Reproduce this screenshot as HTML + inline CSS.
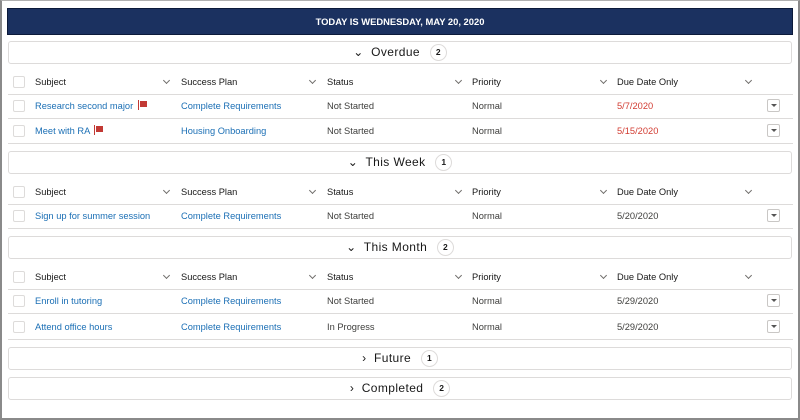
<!DOCTYPE html>
<html><head><style>
*{margin:0;padding:0;box-sizing:border-box}
body{width:800px;height:420px;background:#fff;position:relative;overflow:hidden;font-family:"Liberation Sans",sans-serif;font-size:9.3px;color:#3e3e3c}
.frame{position:absolute;left:0;top:0;width:800px;height:420px;border:2px solid #8a8a8a;border-top:1px solid #b0b0b0;pointer-events:none}
.a{position:absolute}
.banner{left:7px;top:8px;width:786px;height:27px;background:#1b3160;border:1px solid #0c1a3a;color:#fff;font-weight:bold;font-size:9.4px;text-align:center;line-height:25px}
.sec{left:8px;width:784px;height:23px;border:1px solid #dddbda;border-radius:3px;text-align:center;font-size:12px;line-height:21px;color:#181818;letter-spacing:.4px}
.badge{display:inline-block;width:17px;height:17px;border:1px solid #dddbda;border-radius:50%;font-size:8.5px;line-height:15px;font-weight:bold;vertical-align:1px;margin-left:6px;letter-spacing:0}
.row{left:8px;width:785px;height:25px;border-bottom:1px solid #dddbda}
.cb{position:absolute;left:5px;top:6px;width:12px;height:12px;border:1px solid #dddbda;border-radius:2px}
.c{position:absolute;top:0;line-height:24px;white-space:nowrap}
.l{color:#1b6fb5}
.r{color:#d23c32}
.h{color:#181818}
.chev{position:absolute;top:8px;width:5px;height:5px;border-right:1px solid #706e6b;border-bottom:1px solid #706e6b;transform:rotate(45deg)}
.dd{position:absolute;left:759px;top:5px;width:13px;height:13px;border:1px solid #c9c7c5;border-radius:2px}
.dd:after{content:"";position:absolute;left:3px;top:4px;border-left:3px solid transparent;border-right:3px solid transparent;border-top:3px solid #555}
.flag{display:inline-block;width:1px;height:10px;background:#c23934;vertical-align:-1px;margin-left:2px;position:relative}
.flag:after{content:"";position:absolute;left:2px;top:1px;width:7px;height:6px;background:#c23934}
</style></head><body>
<div class="a banner">TODAY IS WEDNESDAY, MAY 20, 2020</div>

<div class="a sec" style="top:41px">⌄&nbsp; Overdue <span class="badge">2</span></div>
<div class="a row" style="top:70px"><div class="cb"></div><span class="c h" style="left:27px">Subject</span><i class="chev" style="left:156px"></i><span class="c h" style="left:173px">Success Plan</span><i class="chev" style="left:302px"></i><span class="c h" style="left:319px">Status</span><i class="chev" style="left:448px"></i><span class="c h" style="left:464px">Priority</span><i class="chev" style="left:593px"></i><span class="c h" style="left:609px">Due Date Only</span><i class="chev" style="left:738px"></i></div>
<div class="a row" style="top:94px"><div class="cb"></div><span class="c l" style="left:27px">Research second major <span class="flag"></span></span><span class="c l" style="left:173px">Complete Requirements</span><span class="c" style="left:319px">Not Started</span><span class="c" style="left:464px">Normal</span><span class="c r" style="left:609px">5/7/2020</span><div class="dd"></div></div>
<div class="a row" style="top:119px"><div class="cb"></div><span class="c l" style="left:27px">Meet with RA <span class="flag"></span></span><span class="c l" style="left:173px">Housing Onboarding</span><span class="c" style="left:319px">Not Started</span><span class="c" style="left:464px">Normal</span><span class="c r" style="left:609px">5/15/2020</span><div class="dd"></div></div>

<div class="a sec" style="top:151px">⌄&nbsp; This Week <span class="badge">1</span></div>
<div class="a row" style="top:180px"><div class="cb"></div><span class="c h" style="left:27px">Subject</span><i class="chev" style="left:156px"></i><span class="c h" style="left:173px">Success Plan</span><i class="chev" style="left:302px"></i><span class="c h" style="left:319px">Status</span><i class="chev" style="left:448px"></i><span class="c h" style="left:464px">Priority</span><i class="chev" style="left:593px"></i><span class="c h" style="left:609px">Due Date Only</span><i class="chev" style="left:738px"></i></div>
<div class="a row" style="top:204px"><div class="cb"></div><span class="c l" style="left:27px">Sign up for summer session</span><span class="c l" style="left:173px">Complete Requirements</span><span class="c" style="left:319px">Not Started</span><span class="c" style="left:464px">Normal</span><span class="c" style="left:609px">5/20/2020</span><div class="dd"></div></div>

<div class="a sec" style="top:236px">⌄&nbsp; This Month <span class="badge">2</span></div>
<div class="a row" style="top:265px"><div class="cb"></div><span class="c h" style="left:27px">Subject</span><i class="chev" style="left:156px"></i><span class="c h" style="left:173px">Success Plan</span><i class="chev" style="left:302px"></i><span class="c h" style="left:319px">Status</span><i class="chev" style="left:448px"></i><span class="c h" style="left:464px">Priority</span><i class="chev" style="left:593px"></i><span class="c h" style="left:609px">Due Date Only</span><i class="chev" style="left:738px"></i></div>
<div class="a row" style="top:289px"><div class="cb"></div><span class="c l" style="left:27px">Enroll in tutoring</span><span class="c l" style="left:173px">Complete Requirements</span><span class="c" style="left:319px">Not Started</span><span class="c" style="left:464px">Normal</span><span class="c" style="left:609px">5/29/2020</span><div class="dd"></div></div>
<div class="a row" style="top:315px"><div class="cb"></div><span class="c l" style="left:27px">Attend office hours</span><span class="c l" style="left:173px">Complete Requirements</span><span class="c" style="left:319px">In Progress</span><span class="c" style="left:464px">Normal</span><span class="c" style="left:609px">5/29/2020</span><div class="dd"></div></div>

<div class="a sec" style="top:347px">›&nbsp; Future <span class="badge">1</span></div>
<div class="a sec" style="top:377px">›&nbsp; Completed <span class="badge">2</span></div>
<div class="frame"></div>
</body></html>
